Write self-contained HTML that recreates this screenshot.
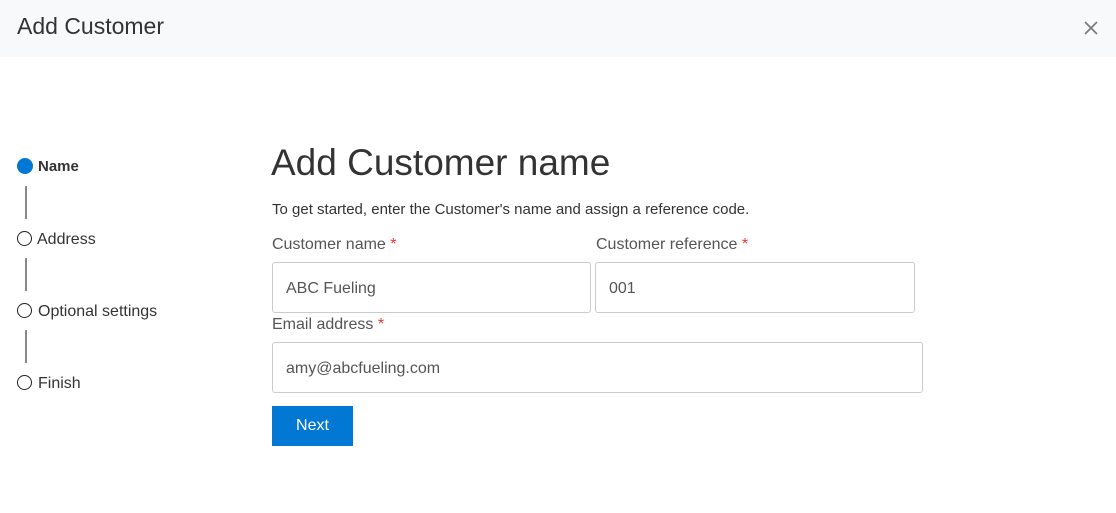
<!DOCTYPE html>
<html><head><style>
body{margin:0;width:1116px;height:513px;background:#fff;font-family:"Liberation Sans",Arial,sans-serif;color:#333;position:relative;overflow:hidden}
.a{position:absolute;white-space:nowrap}
.hdr{position:absolute;left:0;top:0;width:1116px;height:57px;background:#f8f9fa}
.circ{position:absolute;border:1.5px solid #222;border-radius:50%;box-sizing:border-box;width:15px;height:15px}
.line{position:absolute;left:25px;width:2px;height:33px;background:#888}
.st{font-size:16px;color:#333}
.lbl{font-size:16px;color:#555}
.req{color:#e33}
.inp{position:absolute;border:1px solid #ccc;border-radius:3px;box-sizing:border-box;font-size:16px;color:#555;padding-left:13px;line-height:51px}
</style></head><body>
<div class="hdr"></div>
<div class="a" style="left:17px;top:13px;font-size:23px;color:#333">Add Customer</div>
<svg class="a" style="left:1084px;top:21px" width="14" height="14" viewBox="0 0 14 14"><path d="M1 1L13 13M13 1L1 13" stroke="#777" stroke-width="1.6"/></svg>

<div class="a" style="left:17px;top:158px;width:16px;height:16px;border-radius:50%;background:#0078d4"></div>
<div class="a st" style="left:38px;top:158px;font-weight:bold;font-size:15px">Name</div>
<div class="line" style="top:186px"></div>
<div class="circ" style="left:17px;top:231px"></div>
<div class="a st" style="left:37px;top:231px">Address</div>
<div class="line" style="top:258px"></div>
<div class="circ" style="left:17px;top:303px"></div>
<div class="a st" style="left:38px;top:303px">Optional settings</div>
<div class="line" style="top:330px"></div>
<div class="circ" style="left:17px;top:375px"></div>
<div class="a st" style="left:38px;top:375px">Finish</div>

<div class="a" style="left:271px;top:142px;font-size:37px;color:#333">Add Customer name</div>
<div class="a" style="left:272px;top:201px;font-size:15px;color:#333">To get started, enter the Customer's name and assign a reference code.</div>
<div class="a lbl" style="left:272px;top:236px">Customer name <span class="req">*</span></div>
<div class="a lbl" style="left:596px;top:236px">Customer reference <span class="req">*</span></div>
<div class="inp" style="left:272px;top:262px;width:319px;height:51px">ABC Fueling</div>
<div class="inp" style="left:595px;top:262px;width:320px;height:51px">001</div>
<div class="a lbl" style="left:272px;top:316px">Email address <span class="req">*</span></div>
<div class="inp" style="left:272px;top:342px;width:651px;height:51px">amy@abcfueling.com</div>
<div class="a" style="left:272px;top:406px;width:81px;height:40px;background:#0078d4;color:#fff;font-size:16px;text-align:center;line-height:40px">Next</div>
</body></html>
